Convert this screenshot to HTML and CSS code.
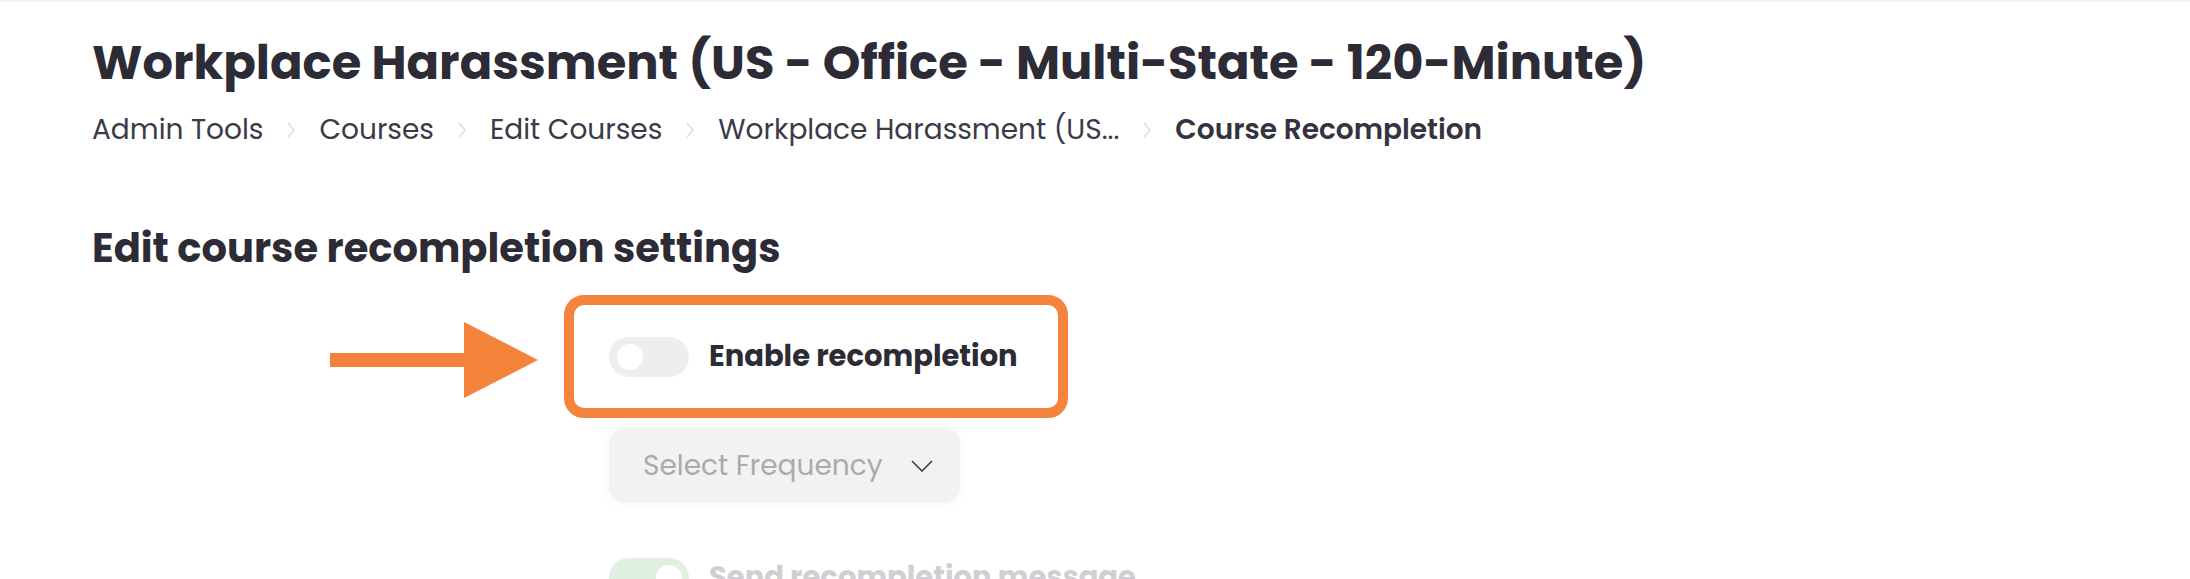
FILE: index.html
```html
<!DOCTYPE html>
<html lang="en">
<head>
    <meta charset="UTF-8">
    <meta name="viewport" content="width=device-width, initial-scale=1.0">
    <title>Course Recompletion</title>
    <link rel="stylesheet" href="styles.css">
</head>
<body>

<div class="header-edge"></div>

<main class="page">
    <h1 class="title">Workplace Harassment (US - Office - Multi-State - 120-Minute)</h1>

    <nav class="crumbs">
        <a href="#">Admin Tools</a>
        <svg class="sep" width="10" height="18" viewBox="0 0 10 18"><polyline points="2,2 8,9 2,16"/></svg>
        <a href="#">Courses</a>
        <svg class="sep" width="10" height="18" viewBox="0 0 10 18"><polyline points="2,2 8,9 2,16"/></svg>
        <a href="#">Edit Courses</a>
        <svg class="sep" width="10" height="18" viewBox="0 0 10 18"><polyline points="2,2 8,9 2,16"/></svg>
        <a href="#">Workplace Harassment (US...</a>
        <svg class="sep" width="10" height="18" viewBox="0 0 10 18"><polyline points="2,2 8,9 2,16"/></svg>
        <span class="current">Course Recompletion</span>
    </nav>

    <h2 class="section-title">Edit course recompletion settings</h2>

    <form class="settings">
        <div class="highlight">
            <svg class="pointer" width="208" height="76" viewBox="0 0 208 76">
                <rect x="0" y="31" width="136" height="14" fill="#f4843b"/>
                <polygon points="134,0 208,38 134,76" fill="#f4843b"/>
            </svg>
            <label class="switch-row">
                <span class="switch"><span class="knob"></span></span>
                <span class="switch-label">Enable recompletion</span>
            </label>
        </div>

        <div class="select">
            <span>Select Frequency</span>
            <svg width="22" height="12" viewBox="0 0 22 12">
                <polyline points="1,1 11,11 21,1" fill="none" stroke="#3d3d3d" stroke-width="1.6"/>
            </svg>
        </div>

        <label class="switch-row muted">
            <span class="switch on"><span class="knob"></span></span>
            <span class="switch-label">Send recompletion message</span>
        </label>
    </form>
</main>

</body>
</html>
```

FILE: styles.css
```css
body {
    margin: 0;
    padding: 0;
    background-color: #fff;
    font-family: "Poppins", "Inter", "Noto Sans", sans-serif;
    color: #2c2b36;
    overflow: hidden;
}
.header-edge {
    height: 3px;
    background: linear-gradient(#ececec, #fff);
}
.page {
    padding: 0 92px;
}
.title {
    margin: 31px 0 0;
    font-size: 48px;
    line-height: 58px;
    font-weight: 700;
    color: #2c2b36;
}
.crumbs {
    display: flex;
    align-items: center;
    gap: 23px;
    margin-top: 21px;
    font-size: 28px;
    line-height: 34px;
}
.crumbs a {
    color: #3b3a47;
    text-decoration: none;
}
.crumbs .sep {
    fill: none;
    stroke: #dadae3;
    stroke-width: 1.3;
}
.crumbs .current {
    color: #34333f;
    font-weight: 600;
}
.section-title {
    margin: 77px 0 0;
    font-size: 40px;
    line-height: 48px;
    font-weight: 700;
    color: #2c2b36;
}
.settings {
    margin: 23px 0 0 472px;
}
.highlight {
    position: relative;
    box-sizing: border-box;
    width: 504px;
    height: 123px;
    padding-left: 35px;
    display: flex;
    align-items: center;
    border: 10px solid #f4843b;
    border-radius: 20px;
}
.pointer {
    position: absolute;
    left: -244px;
    top: 17px;
}
.switch-row {
    display: flex;
    align-items: center;
    gap: 20px;
}
.switch {
    position: relative;
    width: 80px;
    height: 40px;
    border-radius: 20px;
    background-color: #eeeeee;
}
.knob {
    position: absolute;
    left: 8px;
    top: 7px;
    width: 26px;
    height: 26px;
    border-radius: 50%;
    background-color: #fff;
}
.switch.on {
    background-color: #dff0e1;
}
.switch.on .knob {
    left: auto;
    right: 7px;
}
.switch-label {
    font-size: 29px;
    font-weight: 700;
    color: #2c2b36;
}
.select {
    box-sizing: border-box;
    width: 351px;
    height: 75px;
    margin: 10px 0 0 45px;
    padding: 0 27px 0 34px;
    display: flex;
    align-items: center;
    justify-content: space-between;
    border-radius: 16px;
    background-color: #f2f2f2;
    box-shadow: 0 0 14px rgba(0, 0, 0, 0.04);
    font-size: 28px;
    color: #ababab;
}
.muted {
    margin: 53px 0 0 45px;
}
.muted .switch-label {
    color: #d0d0d4;
}
```
